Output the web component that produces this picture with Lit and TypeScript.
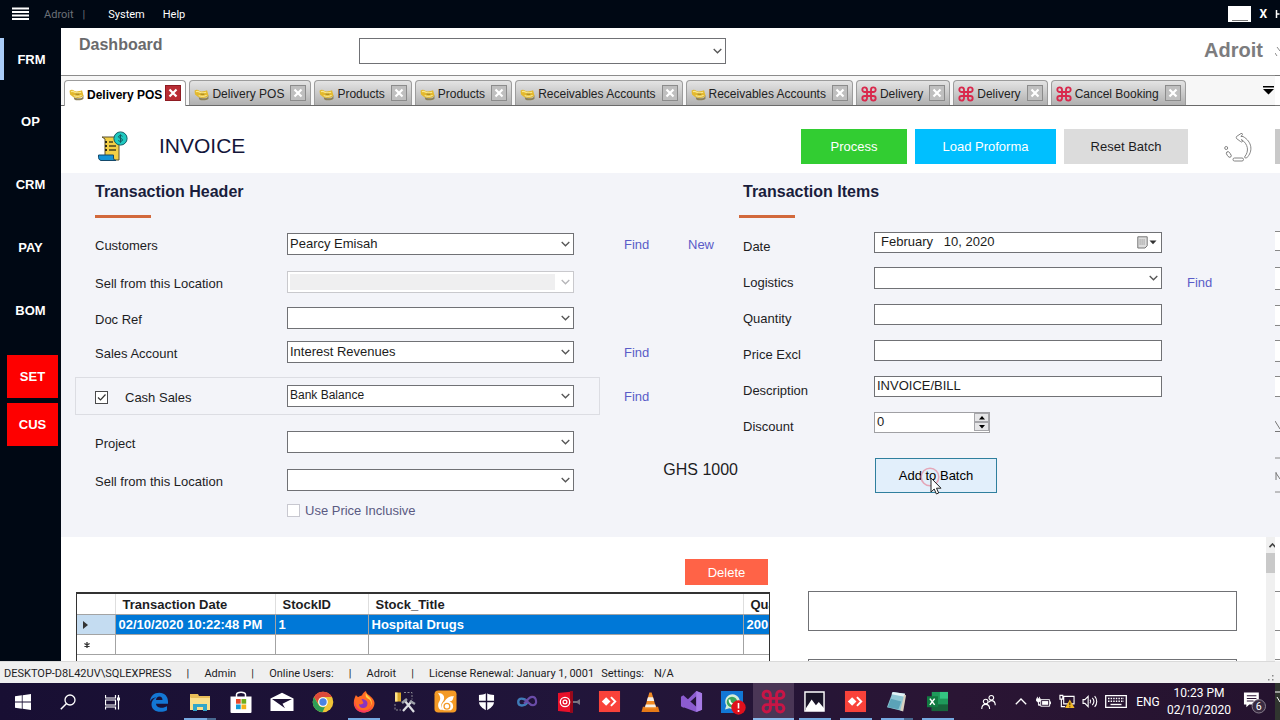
import { LitElement, html, svg, css } from "lit";
import { customElement, property } from "lit/decorators.js";
import { classMap } from "lit/directives/class-map.js";

const chevron = svg`<svg class="chev" viewBox="0 0 9 6" width="9" height="6"><path d="M.7 1l3.8 3.8L8.3 1" fill="none" stroke="currentColor" stroke-width="1.3"/></svg>`;

const coins = svg`<svg viewBox="0 0 16 14" width="15" height="13">
  <path d="M5 9.500c2 2 7 2 9 1l1.500-3v4c-2 2-8 2.500-10 .5z" fill="#8d8157"/>
  <path d="M.5 3C2 1.500 4 1.500 5.500 3 7.500 4.300 11 3.500 14 2.500L15.500 8c-1.500 3-8 3.500-11.500 1.500L1 7z" fill="#e3b92f"/>
  <path d="M2 4c2-1 3 0 4.500.8s4 .4 6.500-.3" fill="none" stroke="#fbe98d" stroke-width="1.200"/>
  <path d="M5 8.300c3 1 6 .8 8.500-.3" fill="none" stroke="#fff3b0" stroke-width="1"/>
  <path d="M7 6.500l4 .2" stroke="#7d6214" stroke-width=".8"/></svg>`;

const command = (color: string, size: number) => svg`<svg viewBox="0 0 24 24" width=${size} height=${size}>
  <path d="M9 9V5.500A3.500 3.500 0 1 0 5.500 9H18.500A3.500 3.500 0 1 0 15 5.500V18.500A3.500 3.500 0 1 0 18.500 15H5.500A3.500 3.500 0 1 0 9 18.500z" fill="none" stroke=${color} stroke-width="2.800"/></svg>`;

const anydesk = svg`<svg viewBox="0 0 24 24" width="23" height="23"><path d="M1 1h22v22H1z" fill="#f9423a"/><path d="M8.500 7.500L13 12l-4.500 4.500L4 12z" fill="#fff"/><path d="M11.500 7.500L16 12l-4.500 4.500" fill="none" stroke="#f9423a" stroke-width="1"/><path d="M13.500 7.500L18 12l-4.500 4.500" fill="none" stroke="#fff" stroke-width="2"/></svg>`;

type TaskItem = { name: string; art: unknown; state?: string };

const tasks: TaskItem[] = [
  { name: "Edge", art: svg`<svg viewBox="0 0 20 20" width="20" height="20"><path d="M1 9.500C1.500 4 5 .8 10.300.8c5.500 0 8.700 4 8.700 8.700v2.300H7c.3 3 3 4 5.500 4 2.300 0 4-.6 5.500-1.500v4c-2 1-4 1.500-6.500 1.500C6 19.800 2.500 17 2.500 12.500c0-3.200 1.700-5.700 5-7.200C4.500 5.700 2.300 7 1 9.500zM7 8h6.500c0-2-1-3.500-3.100-3.500C8.500 4.500 7.300 6 7 8z" fill="#1377d4"/></svg>` },
  { name: "File Explorer", state: "open stack", art: svg`<svg viewBox="0 0 22 20" width="22" height="20"><path d="M1 2h8l1 2h11v14H1z" fill="#e9bd58"/><path d="M2 6h19v12H1V5z" fill="#fbdf8c"/><path d="M4 19v-7h14v7h-4v-4H8v4z" fill="#34a6c9"/></svg>` },
  { name: "Store", art: svg`<svg viewBox="0 0 24 24" width="24" height="24"><path d="M7.500 7V4.500C8 1.500 16 1.500 16.500 4.500V7" fill="none" stroke="#fff" stroke-width="1.500"/><path d="M1.500 6.500h21V22q0 1-1 1h-19q-1 0-1-1z" fill="#fff"/><path d="M7 9h4.700v4.700H7z" fill="#e8482a"/><path d="M12.500 9h4.700v4.700h-4.700z" fill="#6fae1c"/><path d="M7 14.500h4.700v4.700H7z" fill="#149cd8"/><path d="M12.500 14.500h4.700v4.700h-4.700z" fill="#f3b41b"/></svg>` },
  { name: "Mail", art: svg`<svg viewBox="0 0 24 20" width="24" height="20"><path d="M.5 6.500L12 .8l11.500 5.700V19H.5z" fill="#fff"/><path d="M2 7h20l-9.500 4.800 2.500 4.500z" fill="#1c1135"/></svg>` },
  { name: "Chrome", art: svg`<svg viewBox="0 0 22 22" width="22" height="22"><circle cx="11" cy="11" r="10.300" fill="#f0c437"/><path d="M2 6a10.300 10.300 0 0 1 18 0H11a5 5 0 0 0-4.800 6.500z" fill="#dc4a3a"/><path d="M2 6l4.700 8A5 5 0 0 0 13 15.700L10.500 21.300A10.300 10.300 0 0 1 2 6z" fill="#2f9d57"/><circle cx="11" cy="11" r="4.800" fill="#fff"/><circle cx="11" cy="11" r="3.700" fill="#4a83e2"/></svg>` },
  { name: "Firefox", state: "open", art: svg`<svg viewBox="0 0 22 22" width="22" height="22"><path d="M3 4c.5 1 1.500 2 2.500 2C7 5 8 4.500 9 4.500 9.500 2.500 11 1 13 0c0 2 1.500 3 3.500 4.500S21.500 9 21.500 12c0 5.500-4.700 9.500-10.500 9.500S.8 17.500.8 12C.8 8.500 2 6 3 4z" fill="#ff6a25"/><path d="M13 1.500c0 2.500 2 3.200 4 5.500s2.500 6 0 9c2-3 1-7-1.500-8S12 5 13 1.500z" fill="#ffd342"/><path d="M8.500 8c3 0 6 1.500 6 4.500s-2 4.500-4.500 4.500S6 15.500 6 13c1.500 1 3.500 0 4.500-1z" fill="#8a34c0"/><path d="M2 9c-.5 6 3 10.500 9 10.500 4 0 7-2 8-5-1 5-4.500 7-8.500 7C4.500 21.500 0 16 2 9z" fill="#f7365f"/></svg>` },
  { name: "Data Tools", art: svg`<svg viewBox="0 0 22 22" width="22" height="22"><path d="M1 1.500h6v9H1z" fill="#d9a72a"/><path d="M1 1.500h2.500v9H1z" fill="#ffe38a"/><path d="M10 1.500h8v7M1 13v6h6" fill="none" stroke="#8c8a92" stroke-dasharray="2 1.500"/><path d="M11 10l9 11M18 10l-9 10" stroke="#dcdde2" stroke-width="2.200"/><path d="M8 12l5-4M16 10l5 3" stroke="#9fa2ab" stroke-width="2.500"/></svg>` },
  { name: "UC Browser", art: svg`<svg viewBox="0 0 24 24" width="23" height="23"><rect x=".5" y=".5" width="23" height="23" rx="4" fill="#f49a25"/><path d="M4 3.500c4-.5 7 1.500 6.500 5.500-.3 2.500-3 4-3 7 0 2 1 3.500 2.500 4.500H6.500C4.500 19 4 16.500 4.500 14c.5-2 2-3 2-5C6.500 6.500 5.500 5 4 3.500z" fill="#fff"/><path d="M11 12c2-3 4-6 10-5.500-1 1-.8 2-1.300 3.200-.6 1.500-2 2.300-3.700 2.300 3 .5 4 3 4 5s-1 3.500-2.500 4H10c-1.500-1-2.300-2.500-2-4.500.3-2 1.500-3.500 3-4.500z" fill="#fff"/><circle cx="13.500" cy="17" r="3" fill="none" stroke="#f49a25" stroke-width="1.400"/></svg>` },
  { name: "Security", art: svg`<svg viewBox="0 0 18 20" width="17" height="19"><path d="M9 1c2.500 1.500 5 2 8 2v7c0 4.500-4 7.500-8 9.500C5 17.500 1 14.500 1 10V3c3 0 5.500-.5 8-2z" fill="#fff"/><path d="M9 1v19M1 10h16" stroke="#1c1135" stroke-width="1.500"/></svg>` },
  { name: "Visual Studio Installer", art: svg`<svg viewBox="0 0 24 14" width="23" height="13"><path d="M12 8C9 12.500 2 12.500 2 7.500S8.500 3 12 7" fill="none" stroke="#3f7cb8" stroke-width="2.500"/><path d="M8 9c4-1 4-7 9-7s6 9 1 9-5-5-9-5.500" fill="none" stroke="#6a4ca8" stroke-width="2.300"/></svg>` },
  { name: "Recorder", art: svg`<svg viewBox="0 0 24 22" width="24" height="22"><path d="M1 2l15-1.500v21L1 20z" fill="#e8102a"/><path d="M13 0l3 .5v21l-3 .5z" fill="#98081a"/><circle cx="8" cy="11" r="4.700" fill="none" stroke="#fff" stroke-width="1.300"/><circle cx="8" cy="11" r="1.900" fill="none" stroke="#fff" stroke-width="1.200"/><path d="M16 10h4l3-2v6l-3-2h-4z" fill="#777480"/></svg>` },
  { name: "AnyDesk", art: anydesk },
  { name: "VLC", art: svg`<svg viewBox="0 0 20 22" width="19" height="22"><path d="M2 16h16l1.500 5.500H.5z" fill="#e67a17"/><path d="M8.800 1h2.400l5 17H3.800z" fill="#f08a24"/><path d="M7.300 6h5.400l1.200 4H6.100zM5 13.500h10l.8 3H4.200z" fill="#f4efe8"/></svg>` },
  { name: "Visual Studio", art: svg`<svg viewBox="0 0 24 24" width="23" height="23"><path d="M17 1l6 2.500v17L17 23 1 17V7l2.500-1.500 13.500 12v-11L3.500 18.500 1 17 17 1z" fill="#8c5cd0"/><path d="M17 1l6 2.500v17L17 23z" fill="#a77be6"/></svg>` },
  { name: "WhatsApp", art: svg`<svg viewBox="0 0 26 26" width="26" height="26"><path d="M1 2h22v22H1z" fill="#1277d6"/><path d="M5 20.500l1.300-4a7.300 7.300 0 1 1 3 2.700z" fill="#d6ecd8"/><circle cx="12" cy="13" r="5.300" fill="#3ba55c"/><path d="M9.500 10.500c0 3 2 5 5 5" fill="none" stroke="#fff" stroke-width="1.800"/><circle cx="18.500" cy="18.500" r="7.200" fill="#e0101c"/><path d="M18.500 14v5.500M18.500 21v2" stroke="#fff" stroke-width="1.600"/></svg>` },
  { name: "Adroit", state: "current", art: command("#c81546", 25) },
  { name: "Photos", state: "open", art: svg`<svg viewBox="0 0 22 22" width="21" height="21"><path d="M1 1h20v20H1z" fill="#1a1428" stroke="#fff" stroke-width="1.500"/><path d="M2 18l6-9 4.500 6 3-3.500L21 18v3H2z" fill="#fff"/></svg>` },
  { name: "AnyDesk session", state: "open", art: anydesk },
  { name: "Notepad", state: "open stack", art: svg`<svg viewBox="0 0 22 22" width="21" height="21"><path d="M7 1l13 2-3 18-16-4z" fill="#8fc7d4"/><path d="M7 1l13 2-.7 3L5.800 3.500z" fill="#e3f3f6"/><path d="M19 4l2 .5-3 17-3-1z" fill="#d8d0bf"/><path d="M5 8l11 3-3 8-11-2z" fill="#5ba3b8"/></svg>` },
  { name: "Excel", state: "open", art: svg`<svg viewBox="0 0 24 22" width="23" height="21"><path d="M6 1h17v20H6z" fill="#1f9a5b"/><path d="M14.500 1H23v7h-8.500z" fill="#34c481"/><path d="M14.500 14H23v7H6v-7z" fill="#17653b"/><path d="M1 5.500h11.500V17H1z" fill="#117a41"/><path d="M4 8l5 6.500M9 8l-5 6.500" stroke="#fff" stroke-width="1.600"/></svg>` },
];

const tabs = [
  { text: "Delivery POS", cmd: false, active: true },
  { text: "Delivery POS", cmd: false },
  { text: "Products", cmd: false },
  { text: "Products", cmd: false },
  { text: "Receivables Accounts", cmd: false },
  { text: "Receivables Accounts", cmd: false },
  { text: "Delivery", cmd: true },
  { text: "Delivery", cmd: true },
  { text: "Cancel Booking", cmd: true },
];

@customElement("pos-combo")
export class PosCombo extends LitElement {
  @property() value = "";
  @property() label = "";
  @property({ type: Boolean }) disabled = false;
  static styles = css`
    :host { display: grid; grid-template: 1fr / 1fr; height: 22px; min-width: 0; font-family: "Liberation Sans", Arial, sans-serif; font-size: 13px; color: #555; }
    select { grid-area: 1 / 1; min-width: 0; appearance: none; border: 1px solid #707175; border-radius: 0; background: #fff; font: inherit; padding: 0 20px 2px 2px; color: #1c1c1c; margin: 0; }
    :host([large]) { height: 26px; }
    :host([small]) { font-size: 12px; }
    .chev { grid-area: 1 / 1; justify-self: end; align-self: center; margin-right: 4px; pointer-events: none; }
    select:disabled { border-color: #c9c9cd; background: #efeff0; box-shadow: inset 0 0 0 2px #fff, inset -18px 0 0 #fff; opacity: 1; }
    :host([disabled]) { color: #b5b5b8; }
  `;
  render() {
    return html`<select aria-label=${this.label} ?disabled=${this.disabled}><option>${this.value}</option></select>${chevron}`;
  }
}

@customElement("pos-taskbar")
export class PosTaskbar extends LitElement {
  static styles = css`
    :host { display: flex; height: 37px; background: linear-gradient(90deg, #180f33, #21153a 45%, #2a1534 75%, #25132f); color: #fff; font-family: Roboto, "Open Sans", sans-serif; font-size: 12px; }
    button { border: 0; margin: 0; padding: 0; background: none; color: inherit; font: inherit; display: flex; align-items: center; justify-content: center; }
    .sys { width: 45px; }
    .apps { display: flex; padding-left: 3px; }
    .app { width: 41px; border-bottom: 2px solid transparent; padding-top: 2px; }
    .open { background: linear-gradient(#76a9e0, #76a9e0) center bottom / 32px 2px no-repeat; background-origin: border-box; background-clip: border-box; }
    .stack { background-image: linear-gradient(90deg, #76a9e0 72%, #48688f 72%); }
    .current { background: #4a3656; border-bottom-color: #8ab8ea; }
    .tray { margin-left: auto; display: flex; align-items: center; }
    .tray button { width: 23px; height: 100%; }
    .tray .people { width: 42px; }
    .tray .keys { width: 30px; }
    .tray .lang { width: 34px; }
    .tray .clock { width: 68px; flex-direction: column; line-height: 17px; }
    .tray .notes { width: 42px; }
  `;
  render() {
    return html`
      <button class="sys" aria-label="Start"><svg viewBox="0 0 16 16" width="16" height="16"><path d="M0 2.300L6.800 1.300V7.600H0zM7.600 1.200L16 0v7.600H7.600zM0 8.400h6.800v6.300L0 13.700zM7.600 8.400H16V16l-8.400-1.200z" fill="#fff"/></svg></button>
      <button class="sys" aria-label="Search"><svg viewBox="0 0 16 16" width="16" height="16"><circle cx="10" cy="6" r="5" fill="none" stroke="#fff" stroke-width="1.300"/><path d="M6.500 9.500L.8 15.200" stroke="#fff" stroke-width="1.500"/></svg></button>
      <button class="sys" aria-label="Task View"><svg viewBox="0 0 16 16" width="16" height="16"><path d="M.5 1v3h10V1M.5 6h10v5H.5zM.5 15.500v-2.500h10v2.500M13.500 1v14.500" fill="none" stroke="#fff" stroke-width="1.200"/><path d="M12 3.500h3v3h-3z" fill="#fff"/></svg></button>
      <div class="apps">
        ${tasks.map((t) => html`<button class="app ${t.state ?? ""}" aria-label=${t.name}>${t.art}</button>`)}
      </div>
      <div class="tray">
        <button class="people" aria-label="People"><svg viewBox="0 0 16 16" width="15" height="16"><g fill="none" stroke="#fff" stroke-width="1.200"><circle cx="5" cy="7.500" r="2.500"/><path d="M.8 15.500c0-3 1.700-5 4.200-5s4.200 2 4.200 5"/><circle cx="11" cy="3.500" r="2.500"/><path d="M8 8.500c1-1.500 2-2 3-2 2.500 0 4.200 2 4.200 5"/></g></svg></button>
        <button aria-label="Show hidden icons"><svg viewBox="0 0 12 7" width="12" height="7"><path d="M.8 6.200L6 1l5.200 5.200" fill="none" stroke="#fff" stroke-width="1.300"/></svg></button>
        <button aria-label="Battery"><svg viewBox="0 0 16 12" width="15" height="12"><path d="M5 3.500h9.500v7H5z" fill="none" stroke="#fff"/><path d="M6.500 5h6.500v4H6.500z" fill="#fff"/><path d="M15 5.500h1v3h-1z" fill="#fff"/><path d="M.6 2.500h4v2.500l-2 1.500-2-1.500zM1.500.5v2M3.700.5v2M2.600 6.500v3h2" fill="#fff" stroke="#fff" stroke-width=".9"/></svg></button>
        <button aria-label="Network"><svg viewBox="0 0 17 15" width="16" height="15"><path d="M5 2h11v8H5zM8 13h5M1 1h3v4H1zM2.500 5v8h4" fill="none" stroke="#fff" stroke-width="1.200"/><path d="M11.500 5.500l5 9h-10z" fill="#f2b826"/><path d="M11.500 8.500v3M11.500 12.500v1" stroke="#3b2a05" stroke-width="1.100"/></svg></button>
        <button aria-label="Volume"><svg viewBox="0 0 17 14" width="16" height="13"><g fill="none" stroke="#fff" stroke-width="1.200"><path d="M1 5h2l3.500-3.500v11L3 9H1zM8.500 5c1 1.200 1 2.800 0 4M11 3.200c2 2.200 2 5.400 0 7.600M13.500 1.200c3 3.300 3 8.300 0 11.600"/></g></svg></button>
        <button class="keys" aria-label="Touch keyboard"><svg viewBox="0 0 22 13" width="22" height="13"><path d="M.7.7h20.600v11.600H.7z" fill="none" stroke="#fff" stroke-width="1.300"/><path d="M3 3.500h16M3 6.300h16" stroke="#fff" stroke-width="1.500" stroke-dasharray="1.500 1.100"/><path d="M5.500 9.500h11" stroke="#fff" stroke-width="1.400"/></svg></button>
        <button class="lang">ENG</button>
        <button class="clock"><span>10:23 PM</span><span>02/10/2020</span></button>
        <button class="notes" aria-label="6 notifications"><svg viewBox="0 0 24 24" width="23" height="24"><path d="M1 2h15.500v12.500H6.500L3.500 17.500v-3H1z" fill="#fff"/><path d="M4 5.500h10M4 8.300h10M4 11h7" stroke="#2a1534" stroke-width="1.100"/><circle cx="16.500" cy="16.500" r="7" fill="#3a2c42" stroke="#8b8290"/><text x="16.500" y="20.500" font-size="11" text-anchor="middle" fill="#fff">6</text></svg></button>
      </div>`;
  }
}

@customElement("app-root")
export class AppRoot extends LitElement {
  static styles = css`
    * { box-sizing: border-box; }
    :host { display: flex; height: 100vh; overflow: hidden; font-family: "Liberation Sans", Arial, sans-serif; font-size: 13px; color: #1d1d1f; background: #fff; }
    button, input, textarea { font: inherit; border-radius: 0; margin: 0; }
    button { border: 0; padding: 0; }
    a { color: #5a5cc8; text-decoration: none; }
    .screen { flex: 1; min-width: 0; display: flex; flex-direction: column; }
    .edge { width: 5px; height: 720px; flex: none; }

    .topbar { height: 28px; background: #000814; display: flex; align-items: center; padding: 0 8px 0 12px; font-family: Roboto, "Open Sans", sans-serif; font-size: 11px; color: #fff; }
    .topbar button { background: none; color: #fff; }
    .burger { display: flex; margin-right: 15px; }
    .brand { color: #6c7078; display: flex; gap: 9px; margin-right: 23px; }
    .menu { display: flex; gap: 18px; }
    .win { margin-left: auto; display: flex; align-items: center; gap: 8px; }
    .win .min { width: 23px; height: 16px; background: #fff; display: flex; align-items: flex-end; justify-content: center; padding-bottom: 1px; }
    .win .close { font-weight: 700; font-size: 12px; }
    .rule { width: 16px; height: 1px; background: #777; }

    .body { flex: 1; min-height: 0; display: flex; }
    .side { width: 61px; background: #000814; display: flex; flex-direction: column; }
    .side button { height: 63px; background: none; color: #fff; font-weight: 700; }
    .side .on { border-left: 4px solid #a9ccf8; height: 42px; margin: 10px 0; padding-right: 2px; }
    .side .red { height: 43px; margin: 13px 3px 0 7px; background: #fe0000; }
    .side .red + .red { margin-top: 5px; }

    .main { flex: 1; min-width: 0; display: flex; flex-direction: column; }
    .head { height: 48px; display: flex; align-items: flex-start; padding: 8px 12px 0 18px; border-bottom: 1px solid #8c8c8c; color: #6a6a6c; }
    .head h1 { font-size: 16px; line-height: 18px; margin: 0; width: 280px; }
    .head pos-combo { width: 367px; margin-top: 2px; }
    .head .org { margin-left: auto; font-size: 20px; line-height: 28px; font-weight: 700; color: #7c7c7e; }

    .tabs { height: 30px; display: flex; align-items: flex-end; gap: 3px; padding: 0 1px 0 3px; background: #f7f7f7; border-bottom: 1px solid #6a6a6a; font-size: 12px; }
    .tab { height: 25px; display: flex; align-items: center; gap: 3px; padding: 2px 4px 0 4px; border: 1px solid #9c9c9c; border-bottom: 0; border-radius: 4px 4px 0 0; background: linear-gradient(#e4e4e4, #b0b0b0); white-space: nowrap; color: #222; }
    .tab svg { flex: none; }
    .tab .x { width: 16px; height: 16px; margin-left: 3px; border: 1px solid #8b8b8b; background: #bfbfbf; display: flex; align-items: center; justify-content: center; align-self: flex-start; margin-top: 2px; }
    .tab.active { background: #fff; font-weight: 700; color: #000; height: 26px; margin-bottom: -1px; }
    .tab.active .x { background: #b92d35; border-color: #8e1b22; margin-left: 0; }
    .more { margin-left: auto; align-self: center; background: none; display: flex; }

    .title { height: 67px; display: flex; align-items: center; padding: 14px 23px 0 36px; }
    .title h2 { font-size: 21px; line-height: 24px; font-weight: 400; color: #14163a; margin: 0 auto 0 31px; padding-bottom: 1px; }
    .acts { display: flex; gap: 8px; margin-right: 36px; }
    .acts button { height: 35px; color: #fff; }
    .go { width: 106px; background: #32cd32; }
    .load { width: 141px; background: #00bfff; }
    .acts .reset { width: 124px; background: #dcdcdc; color: #1d1d1f; }

    .form { background: #f3f4f9; height: 364px; padding: 9px 0 0 34px; display: grid; grid-template-columns: 644fr 536fr; }
    .form h3 { margin: 0; font-size: 16px; line-height: 20px; color: #1a1d3c; }
    .bar { width: 56px; height: 3px; background: #d2693c; margin: 13px 0 7px; }
    .right h3, .right .row { margin-left: 4px; }
    .row { display: flex; align-items: center; height: 38px; }
    .core { flex: 1; min-width: 0; height: 100%; display: grid; grid-template-columns: 192px minmax(0, 1fr); align-items: center; margin: 0 24px 0 -20px; padding: 0 25px 0 19px; border: 1px solid transparent; }
    .core > label { padding-top: 2px; }
    .core.boxed { border-color: #dcdde3; }
    .check { display: flex; align-items: center; gap: 17px; padding-top: 3px; }
    .tight { height: 34px; }
    .group { margin: 8px 0; }
    input[type="checkbox"] { appearance: none; width: 13px; height: 13px; border: 1px solid #4a4a4c; background: #fff; margin: 0; }
    .box { display: grid; width: 13px; align-items: center; }
    .box input, .box svg { grid-area: 1 / 1; }
    .box svg { pointer-events: none; }
    .opt { display: flex; align-items: center; gap: 5px; height: 22px; padding-left: 192px; color: #5a5a82; }
    .opt input[type="checkbox"] { border-color: #c8c8d0; }
    .links { width: 115px; display: flex; }
    .links a { width: 64px; }
    .links .new { width: 51px; }
    .total { align-self: flex-start; width: 115px; text-align: right; font-size: 16px; line-height: 18px; padding-right: 1px; }

    .right .bar { margin-bottom: 6px; }
    .right .row { display: grid; grid-template-columns: 131px minmax(0, 1fr) 113px; height: 36px; }
    .right .row label, .right .row a { padding-top: 8px; }
    .right .row a { padding-left: 25px; }
    .field { min-width: 0; height: 21px; border: 1px solid #707175; background: #fff; padding: 0 2px 1px; color: #1c1c1c; }
    .over { display: grid; align-items: center; min-width: 0; }
    .over > * { grid-area: 1 / 1; }
    .over > svg { justify-self: end; margin-right: 5px; pointer-events: none; }
    .date { padding-left: 6px; }
    .spin { width: 116px; }
    .spin .field { border-color: #a0a0a4; appearance: textfield; }
    .spin .field::-webkit-inner-spin-button { display: none; }
    .steps { justify-self: end; width: 15px; display: grid; grid-template-rows: 9px 9px; margin-right: 1px; }
    .steps button { background: #e6e6e8; border: 1px solid #a6a6aa; display: flex; align-items: center; justify-content: center; }
    .addline { padding: 18px 0 0 136px; }
    .addwrap { position: relative; width: 122px; }
    .add { width: 122px; height: 35px; background: #e2effb; border: 1px solid #2f7f9e; }
    .pointer { position: absolute; left: 45px; top: 9px; pointer-events: none; }

    .bottom { flex: 1; min-height: 0; display: grid; grid-template-columns: 694fr 496fr 9px; padding-left: 15px; overflow: hidden; }
    .list { min-width: 0; display: flex; flex-direction: column; }
    .del { align-self: flex-end; width: 83px; height: 26px; background: #ff6347; color: #fff; margin: 22px 2px 7px 0; }
    .grid { flex: none; height: 90px; overflow: hidden; border: 1px solid #333; border-top-width: 2px; border-bottom: 0; }
    table { border-collapse: collapse; table-layout: fixed; width: 100%; font-weight: 700; }
    th, td { height: 20px; padding: 1px 3px 0; text-align: left; border-right: 1px solid #a3a3a3; border-bottom: 1px solid #a3a3a3; overflow: hidden; white-space: nowrap; }
    th { border-right-color: #dedede; padding-left: 7px; padding-right: 0; }
    th:last-child, td:last-child { border-right: 0; padding-right: 0; }
    .mark { padding: 0 0 0 6px; }
    .c0 { width: 38px; } .c1 { width: 160px; } .c2 { width: 93px; } .c4 { width: 26px; }
    tr.sel td { background: #0078d7; color: #fff; }
    tr.sel td.mark { background: #c4dcf1; }
    .memos { padding: 54px 29px 0 38px; display: flex; flex-direction: column; gap: 28px; min-width: 0; }
    textarea { height: 40px; flex: none; width: 100%; resize: none; border: 1px solid #707175; background: #fff; }
    .scroll { background: #f0f0f0; display: flex; flex-direction: column; justify-content: space-between; padding: 6px 0 4px; }
    .scroll svg { align-self: flex-end; }
    .thumb { height: 20px; background: #c9c9c9; margin: 5px 0 auto; }

    .status { height: 22px; background: #efefef; border-top: 1px solid #dadada; display: flex; align-items: center; font-family: Roboto, "Open Sans", sans-serif; font-size: 11px; padding: 1px 1px 0 4px; white-space: pre; }
    .status .sep { width: 33px; text-align: center; }
    .status .gap { margin-left: 7px; }
    .status .na { margin-left: 10px; }
    .grip { margin: auto 0 2px auto; }
  `;

  private row(label: string, id: string, opts: { value?: string; tight?: boolean; disabled?: boolean; links?: unknown } = {}) {
    return html`<div class=${classMap({ row: true, tight: !!opts.tight })}>
      <div class="core"><label for=${id}>${label}</label><pos-combo id=${id} label=${label} value=${opts.value ?? ""} ?disabled=${!!opts.disabled}></pos-combo></div>
      ${opts.links ?? html`<div class="links"></div>`}
    </div>`;
  }

  render() {
    const find = html`<div class="links"><a href="#">Find</a></div>`;
    return html`
      <div class="screen">
        <header class="topbar">
          <button class="burger" aria-label="Menu"><svg viewBox="0 0 17 14" width="17" height="14"><path d="M0 1.500h17M0 5h17M0 8.500h17M0 12h17" stroke="#fff" stroke-width="2"/></svg></button>
          <span class="brand"><span>Adroit</span><span>|</span></span>
          <nav class="menu"><button>System</button><button>Help</button></nav>
          <div class="win"><button class="min" aria-label="Minimise"><span class="rule"></span></button><button class="close" aria-label="Close">X</button></div>
        </header>
        <div class="body">
          <nav class="side">
            <button class="on">FRM</button><button>OP</button><button>CRM</button><button>PAY</button><button>BOM</button>
            <button class="red">SET</button><button class="red">CUS</button>
          </nav>
          <main class="main">
            <div class="head"><h1>Dashboard</h1><pos-combo large label="Search"></pos-combo><span class="org">Adroit</span></div>
            <div class="tabs">
              ${tabs.map((t) => html`<div class=${classMap({ tab: true, active: !!t.active })}>
                ${t.cmd ? command("#d9284c", 16) : coins}<span>${t.text}</span>
                <button class="x" aria-label="Close tab"><svg viewBox="0 0 10 10" width="10" height="10"><path d="M1.500 1.500l7 7M8.500 1.500l-7 7" stroke="#fff" stroke-width="2.200"/></svg></button></div>`)}
              <button class="more" aria-label="More tabs"><svg viewBox="0 0 11 9" width="11" height="9"><path d="M0 0h11v1.500H0zM0 3h11L5.500 8.500z" fill="#000"/></svg></button>
            </div>
            <div class="title">
              <svg viewBox="0 0 31 31" width="31" height="31"><path d="M5 6h17v23H8V8z" fill="#f3cf45" stroke="#5a5230"/><path d="M1.500 24h15v3q0 2.500 2.500 2.500H4Q1 29 1.500 24z" fill="#1694d6" stroke="#14496a"/><path d="M8 11h2M8 15h2M8 19h2" stroke="#2f2a14" stroke-width="2"/><path d="M12 11h4M12 15h7M12 19h7" stroke="#4a431f" stroke-width="1.300"/><circle cx="23.500" cy="7.500" r="6.600" fill="#1fc9c0" stroke="#14606a"/><path d="M25.500 5.300c-1-1.200-4-1-4 .6s4 1.200 4 3-3 1.900-4.200.6M23.500 3.300v8.500" fill="none" stroke="#135b62"/></svg>
              <h2>INVOICE</h2>
              <div class="acts"><button class="go">Process</button><button class="load">Load Proforma</button><button class="reset">Reset Batch</button></div>
              <svg viewBox="0 0 28 30" width="28" height="30"><g fill="none" stroke="#777" stroke-width=".9"><path d="M19 4.500C28 9.500 29.500 19.500 22.500 26q-1.500.5-2-1C25.500 19 24 12 17.500 7.500L18.500 9.500q-1 1-2 0L12.500 6.500q-.5-1 0-2L17 1.500q1.500-.5 1.500 1l-1.500 2z"/><rect x="9" y="26" width="10.500" height="3" rx="1.500"/><ellipse cx="4.800" cy="22.500" rx="1.800" ry="3.200" transform="rotate(-35 4.800 22.500)"/><circle cx="2.200" cy="16" r="1.500"/></g></svg>
            </div>
            <div class="form">
              <section class="left">
                <h3>Transaction Header</h3><div class="bar"></div>
                ${this.row("Customers", "cust", { value: "Pearcy Emisah", links: html`<div class="links"><a href="#">Find</a><a class="new" href="#">New</a></div>` })}
                ${this.row("Sell from this Location", "loc", { disabled: true })}
                ${this.row("Doc Ref", "doc", { tight: true })}
                ${this.row("Sales Account", "acct", { value: "Interest Revenues", tight: true, links: find })}
                <div class="row group">
                  <div class="core boxed"><div class="check"><span class="box"><input id="cash" type="checkbox" checked /><svg viewBox="0 0 13 13" width="13" height="13"><path d="M3 6.500l2.500 2.500L10.500 3.500" fill="none" stroke="#333" stroke-width="1.200"/></svg></span><label for="cash">Cash Sales</label></div>
                    <pos-combo small label="Cash account" value="Bank Balance"></pos-combo></div>
                  ${find}
                </div>
                ${this.row("Project", "proj")}
                ${this.row("Sell from this Location", "loc2", { links: html`<output class="total">GHS 1000</output>` })}
                <div class="opt"><input id="incl" type="checkbox" /><label for="incl">Use Price Inclusive</label></div>
              </section>
              <section class="right">
                <h3>Transaction Items</h3><div class="bar"></div>
                <div class="row"><label for="date">Date</label><span class="over"><input id="date" class="field date" value="February   10, 2020" /><svg viewBox="0 0 20 13" width="20" height="13"><path d="M.8.800h9.400v9L8 12H.8z" fill="#ddd" stroke="#777"/><path d="M2.500 4h6M2.500 6h6M2.500 8h6" stroke="#888" stroke-dasharray="1.200 .8"/><path d="M12.500 4.500h7L16 8.300z" fill="#333"/></svg></span></div>
                <div class="row"><label for="logi">Logistics</label><pos-combo id="logi" label="Logistics"></pos-combo><a href="#">Find</a></div>
                <div class="row"><label for="qty">Quantity</label><input id="qty" class="field" /></div>
                <div class="row"><label for="price">Price Excl</label><input id="price" class="field" /></div>
                <div class="row"><label for="desc">Description</label><input id="desc" class="field" value="INVOICE/BILL" /></div>
                <div class="row"><label for="disc">Discount</label><span class="over spin"><input id="disc" class="field" type="number" value="0" /><span class="steps">
                  <button aria-label="Increase"><svg viewBox="0 0 6 4" width="6" height="4"><path d="M3 0l3 3.500H0z" fill="#000"/></svg></button>
                  <button aria-label="Decrease"><svg viewBox="0 0 6 4" width="6" height="4"><path d="M3 3.500L0 0h6z" fill="#000"/></svg></button></span></span></div>
                <div class="addline"><div class="addwrap"><button class="add">Add to Batch</button>
                  <svg class="pointer" viewBox="0 0 24 30" width="24" height="30"><circle cx="10" cy="10" r="8.800" fill="none" stroke="#e58ea0" stroke-opacity=".75" stroke-width="1.600"/><path d="M11 11v14l3.200-3 2.200 5 2.300-1-2.200-4.800H21z" fill="#fff" stroke="#222"/></svg></div></div>
              </section>
            </div>
            <div class="bottom">
              <div class="list">
                <button class="del">Delete</button>
                <div class="grid"><table>
                  <colgroup><col class="c0" /><col class="c1" /><col class="c2" /><col /><col class="c4" /></colgroup>
                  <thead><tr><th></th><th>Transaction Date</th><th>StockID</th><th>Stock_Title</th><th>Quantity</th></tr></thead>
                  <tbody>
                    <tr class="sel"><td class="mark"><svg viewBox="0 0 5 8" width="5" height="8"><path d="M0 0l5 4-5 4z" fill="#333"/></svg></td><td>02/10/2020 10:22:48 PM</td><td>1</td><td>Hospital Drugs</td><td>200</td></tr>
                    <tr><td class="mark"><svg viewBox="0 0 8 8" width="8" height="8"><path d="M4 1v6M1.400 2.500l5.200 3M6.600 2.500l-5.200 3" stroke="#333" stroke-width="1.300"/></svg></td><td></td><td></td><td></td><td></td></tr>
                  </tbody></table></div>
              </div>
              <div class="memos"><textarea aria-label="Notes"></textarea><textarea aria-label="Remarks"></textarea></div>
              <div class="scroll"><svg viewBox="0 0 6 5" width="6" height="5"><path d="M.5 4.200L3.500 1l3 3.200" fill="none" stroke="#444" stroke-width="1.600"/></svg><span class="thumb"></span><svg viewBox="0 0 6 5" width="6" height="5"><path d="M.5.8L3.500 4l3-3.200" fill="none" stroke="#444" stroke-width="1.600"/></svg></div>
            </div>
          </main>
        </div>
        <footer class="status"><span>DESKTOP-D8L42UV\\SQLEXPRESS</span><span class="sep">|</span><span>Admin</span><span class="sep">|</span><span>Online Users:</span><span class="sep">|</span><span>Adroit</span><span class="sep">|</span><span>License Renewal: January 1, 0001</span><span class="gap">Settings:</span><span class="na">N/A</span>
          <svg class="grip" viewBox="0 0 6 6" width="6" height="6"><path d="M4 0h1.500v1.500H4zM4 4h1.500v1.500H4zM0 4h1.500v1.500H0z" fill="#888"/></svg></footer>
        <pos-taskbar></pos-taskbar>
      </div>
      <svg class="edge" viewBox="0 0 5 720">
        <path d="M0 0h5v28H0z" fill="#000814"/><path d="M1.500 10v8M1.500 14h3" stroke="#fff" stroke-width="1.500"/>
        <path d="M0 28h5v145H0z" fill="#fff"/><path d="M0 75.500h5M0 105.500h5" stroke="#777"/><path d="M2 47l3 4M0 53l2 3" stroke="#8a8a8a"/>
        <path d="M0 129h5v35H0z" fill="#c9c9c9"/><path d="M0 173h5v364H0z" fill="#f3f4f9"/>
        <path d="M0 231.500h5v19H0zM0 267.500h5v22H0zM0 305.500h5v19H0zM0 340.500h5v20H0zM0 376.500h5v20H0z" fill="#fff"/>
        <path d="M0 231.500h5M0 250.500h5M0 267.500h5M0 289.500h5M0 305.500h5M0 325.500h5M0 340.500h5M0 361.500h5M0 376.500h5M0 396.500h5M0 458h5M0 492h5M0 591.500h5M0 630.500h5M0 659.500h5" stroke="#888"/>
        <path d="M0 421l5 8M0 431.500h5M1 472v8M1 473l4 6" stroke="#777"/>
        <path d="M0 661h5v22H0z" fill="#efefef"/><path d="M0 683h5v37H0z" fill="#30352f"/><path d="M0 692h5M2 697l3 5" stroke="#fff"/>
      </svg>`;
  }
}
